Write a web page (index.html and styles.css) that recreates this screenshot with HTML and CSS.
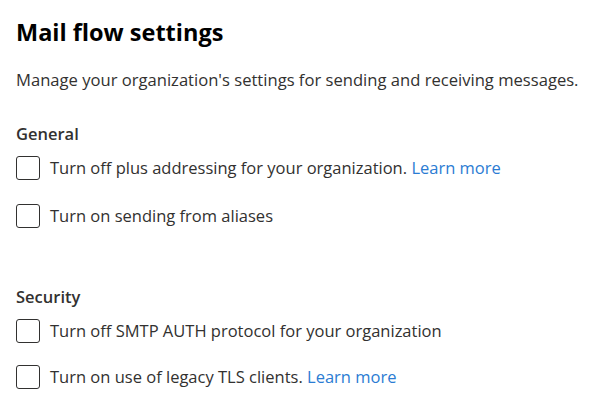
FILE: index.html
```html
<!DOCTYPE html>
<html lang="en">
<head>
    <meta charset="utf-8"/>
    <meta content="width=device-width, initial-scale=1.0" name="viewport"/>
    <title>Mail flow settings</title>
    <link rel="stylesheet" href="styles.css">
</head>
<body>
    <div class="page">
        <h1 class="title">Mail flow settings</h1>
        <p class="description">Manage your organization's settings for sending and receiving messages.</p>

        <div class="group">
            <h2 class="group-title">General</h2>
            <label class="option">
                <input type="checkbox" class="check"/>
                <span class="option-text">Turn off plus addressing for your organization. <a href="#" class="link">Learn more</a></span>
            </label>
            <label class="option">
                <input type="checkbox" class="check"/>
                <span class="option-text">Turn on sending from aliases</span>
            </label>
        </div>

        <div class="group security">
            <h2 class="group-title">Security</h2>
            <label class="option">
                <input type="checkbox" class="check"/>
                <span class="option-text">Turn off SMTP AUTH protocol for your organization</span>
            </label>
            <label class="option">
                <input type="checkbox" class="check"/>
                <span class="option-text">Turn on use of legacy TLS clients. <a href="#" class="link">Learn more</a></span>
            </label>
        </div>
    </div>
</body>
</html>
```

FILE: styles.css
```css
body {
    margin: 0;
    padding: 0;
    background-color: #fff;
    font-family: "Open Sans", "Noto Sans", sans-serif;
    color: #323130;
}
.page {
    padding: 18px 16px 0 16px;
}
.title {
    margin: 0;
    font-size: 23.5px;
    line-height: 28px;
    font-weight: 700;
    color: #000;
}
.description {
    margin: 23px 0 0 0;
    font-size: 16.6px;
    line-height: 22px;
    white-space: nowrap;
}
.group {
    margin-top: 32px;
    display: flex;
    flex-direction: column;
}
.group.security {
    margin-top: 58px;
}
.group-title {
    margin: 0 0 11px 0;
    font-size: 16.5px;
    line-height: 22px;
    font-weight: 600;
}
.option {
    display: flex;
    align-items: center;
    gap: 10px;
    height: 24px;
    font-size: 16.5px;
    line-height: 22px;
    white-space: nowrap;
    cursor: pointer;
}
.option + .option {
    margin-top: 24px;
}
.security .option + .option {
    margin-top: 22px;
}
.check {
    appearance: none;
    -webkit-appearance: none;
    margin: 0;
    width: 24px;
    height: 24px;
    box-sizing: border-box;
    border: 1px solid #323130;
    border-radius: 3px;
    background-color: #fff;
    flex-shrink: 0;
    cursor: pointer;
}
.link {
    color: #2b7cd3;
    text-decoration: none;
}
```
